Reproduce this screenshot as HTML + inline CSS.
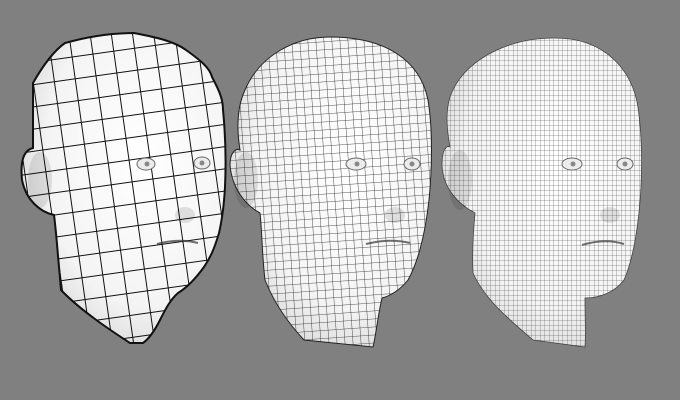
<!DOCTYPE html>
<html><head><style>
html,body{margin:0;padding:0;background:#7f7f7f;}
svg{display:block}
</style></head><body>
<svg width="680" height="400" viewBox="0 0 680 400" xmlns="http://www.w3.org/2000/svg">
<defs>
<pattern id="g1" width="21" height="22" patternUnits="userSpaceOnUse" patternTransform="rotate(-8)">
<path d="M0 0H21M0 0V22" stroke="#111" stroke-width="2" fill="none"/></pattern>
<pattern id="g2" width="8" height="8" patternUnits="userSpaceOnUse" patternTransform="rotate(-4)">
<path d="M0 0H8M0 0V8" stroke="#222" stroke-width="0.8" fill="none"/></pattern>
<pattern id="g3" width="4.5" height="5" patternUnits="userSpaceOnUse">
<path d="M0 0H4.5M0 0V5" stroke="#444" stroke-width="0.5" fill="none"/></pattern>
<radialGradient id="sh" cx="0.6" cy="0.4" r="0.8">
<stop offset="0" stop-color="#fff"/><stop offset="0.6" stop-color="#f4f4f4"/><stop offset="1" stop-color="#c4c4c4"/></radialGradient>
<path id="h1" d="M65,43 C90,36 115,33 134,33 C160,38 175,42 186,50 C200,60 210,68 212,77 C220,92 223,100 223,110 C226,140 226,165 225,187 C224,205 222,220 219,233 C214,250 210,258 204,267 C196,278 188,287 178,293 C170,300 165,310 160,320 C155,330 150,338 143,343 L130,343 C110,330 80,310 61,290 L59,267 C57,245 56,230 54,215 C40,212 26,200 22,180 C20,160 24,150 33,148 L33,83 C45,62 55,50 65,43 Z"/>
<path id="h2" d="M330,37 C385,37 420,60 428,100 C433,130 432,170 429,200 C425,235 418,262 408,280 C400,290 390,296 382,298 C378,315 376,335 373,347 L304,340 C290,325 275,305 265,280 C262,255 262,230 260,213 C245,205 232,188 230,165 C230,152 236,148 240,150 C236,125 238,105 245,90 C260,55 295,37 330,37 Z"/>
<path id="h3" d="M555,38 C605,38 632,70 638,107 C642,135 642,165 641,187 C639,225 633,260 624,280 C615,292 600,298 585,298 C585,320 586,335 585,347 L533,340 C510,320 485,300 473,273 C472,255 473,235 475,213 C460,205 443,190 442,165 C442,150 446,145 450,147 C446,125 446,110 450,97 C462,62 505,38 555,38 Z"/>
<clipPath id="c1"><use href="#h1"/></clipPath>
<clipPath id="c2"><use href="#h2"/></clipPath>
<clipPath id="c3"><use href="#h3"/></clipPath>
</defs>
<rect width="680" height="400" fill="#808080"/>
<use href="#h1" fill="url(#sh)"/>
<rect x="0" y="0" width="680" height="400" fill="url(#g1)" clip-path="url(#c1)"/>
<use href="#h1" fill="none" stroke="#111" stroke-width="2"/>
<use href="#h2" fill="url(#sh)"/>
<rect x="0" y="0" width="680" height="400" fill="url(#g2)" clip-path="url(#c2)"/>
<use href="#h2" fill="none" stroke="#222" stroke-width="1"/>
<use href="#h3" fill="url(#sh)"/>
<rect x="0" y="0" width="680" height="400" fill="url(#g3)" clip-path="url(#c3)"/>
<use href="#h3" fill="none" stroke="#444" stroke-width="0.8"/>
<g fill="#ececec" stroke="#666" stroke-width="1">
<ellipse cx="146" cy="164" rx="9" ry="6"/><ellipse cx="202" cy="163" rx="8" ry="6"/>
<ellipse cx="356" cy="164" rx="10" ry="6"/><ellipse cx="412" cy="164" rx="8" ry="6"/>
<ellipse cx="572" cy="164" rx="10" ry="6"/><ellipse cx="625" cy="164" rx="8" ry="6"/>
</g>
<g fill="#888">
<circle cx="147" cy="164" r="2.5"/><circle cx="202" cy="163" r="2.5"/>
<circle cx="357" cy="164" r="2.5"/><circle cx="412" cy="164" r="2.5"/>
<circle cx="573" cy="164" r="2.5"/><circle cx="625" cy="164" r="2.5"/>
</g>
<g fill="none" stroke="#333" stroke-width="2" opacity="0.7">
<path d="M157,244 Q178,238 198,243"/><path d="M366,244 Q390,238 410,243"/><path d="M582,245 Q605,238 624,244"/>
</g>
<g fill="#000" opacity="0.1">
<ellipse cx="40" cy="180" rx="12" ry="28"/><ellipse cx="246" cy="180" rx="12" ry="28"/><ellipse cx="460" cy="180" rx="12" ry="30"/>
<ellipse cx="185" cy="215" rx="10" ry="8"/><ellipse cx="395" cy="215" rx="10" ry="8"/><ellipse cx="610" cy="215" rx="10" ry="8"/>
</g>
</svg>
</body></html>
